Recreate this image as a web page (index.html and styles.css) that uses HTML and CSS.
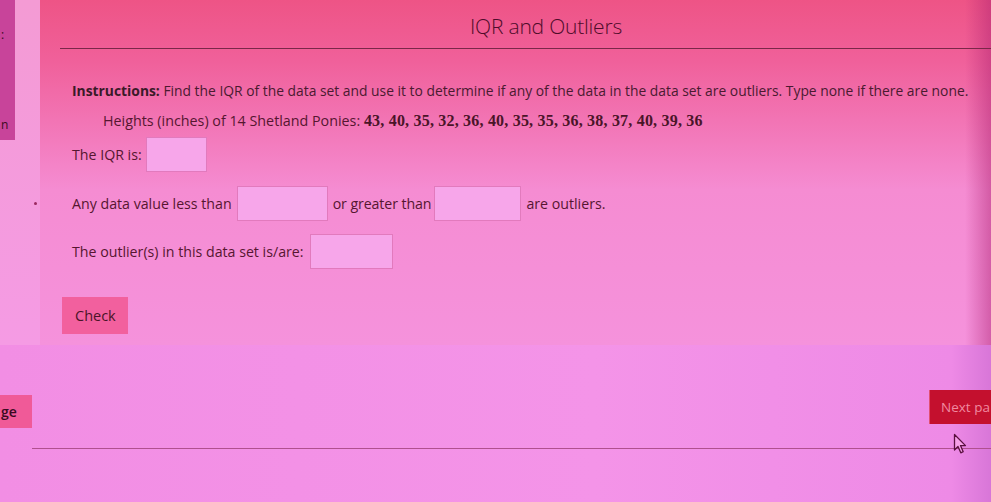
FILE: index.html
```html
<!DOCTYPE html>
<html>
<head>
<meta charset="utf-8">
<link rel="stylesheet" href="styles.css">
</head>
<body>
<div class="page">
  <div class="top">
    <aside class="side">
      <div class="side-panel"><span class="s1">:</span><span class="s2">n</span></div>
      <span class="dot"></span>
    </aside>
    <main class="card">
      <header class="head">
        <h1 class="title">IQR and Outliers</h1>
      </header>
      <p class="instr"><b>Instructions:</b> Find the IQR of the data set and use it to determine if any of the data in the data set are outliers. Type none if there are none.</p>
      <p class="heights">Heights (inches) of 14 Shetland Ponies: <span class="math">43, 40, 35, 32, 36, 40, 35, 35, 36, 38, 37, 40, 39, 36</span></p>
      <div class="row r1"><span>The IQR is:</span><span class="box w60"></span></div>
      <div class="row r2"><span>Any data value less than</span><span class="box w90"></span><span>or greater than</span><span class="box w86"></span><span>are outliers.</span></div>
      <div class="row r3"><span>The outlier(s) in this data set is/are:</span><span class="box w82"></span></div>
      <button class="check">Check</button>
    </main>
  </div>
  <footer class="foot">
    <div class="nav">
      <button class="prev">ge</button>
      <button class="next">Next pa</button>
    </div>
    <div class="rule"></div>
  </footer>
  <svg class="cursor" width="16" height="22" viewBox="0 0 16 22"><path d="M1.5 1.5 L1.5 17 L5 13.5 L7.8 19.8 L10.2 18.7 L7.5 12.6 L12.5 12.6 Z" fill="#f6a0e8" stroke="#5a1040" stroke-width="1.3" stroke-linejoin="round"/></svg>
</div>
</body>
</html>
```
FILE: styles.css
```css
html, body {
  margin: 0;
  padding: 0;
}
body {
  width: 991px;
  height: 502px;
  overflow: hidden;
  background: linear-gradient(to right, #f28ee4 0, #f494e8 60%, #ee8ae6 96%, #d876d8 100%);
  font-family: "Open Sans", "Noto Sans", sans-serif;
  color: #561630;
}
.page {
  position: relative;
  width: 991px;
  height: 502px;
}
.top {
  display: flex;
  height: 345px;
}
.side {
  width: 40px;
  flex: none;
  background: linear-gradient(to bottom, #f49bd4, #f59be4);
}
.side-panel {
  width: 15px;
  height: 140px;
  background: #c8449a;
  display: flex;
  flex-direction: column;
  font-size: 12px;
  color: #3a0a20;
  line-height: 14px;
  overflow: hidden;
}
.s1 { margin-top: 28px; padding-left: 1px; }
.s2 { margin-top: 76px; padding-left: 1px; }
.dot {
  display: block;
  width: 3px;
  height: 3px;
  border-radius: 50%;
  background: #9a2860;
  margin: 62px 0 0 34px;
}
.card {
  flex: 1;
  min-width: 0;
  padding: 0 0 0 32px;
  background:
    linear-gradient(to right, rgba(180,30,110,0) 0, rgba(180,30,110,0) 925px, rgba(170,30,110,0.45) 951px),
    linear-gradient(to bottom, #ee5486 0, #f0609a 60px, #f274b4 120px, #f58cd2 190px, #f592dc 345px);
  display: flex;
  flex-direction: column;
  align-items: flex-start;
}
.head {
  margin-left: -12px;
  width: 972px;
  flex: none;
  height: 48px;
  border-bottom: 1px solid #7a2848;
  display: flex;
  justify-content: center;
  align-items: flex-end;
}
.title {
  margin: 0 0 7px 0;
  font-size: 21px;
  font-weight: 300;
  line-height: 30px;
  color: #4e0c2a;
  letter-spacing: -0.2px;
}
.instr {
  margin: 32px 0 0 0;
  font-size: 13.85px;
  line-height: 20px;
  white-space: nowrap;
  color: #4a1a30;
}
.instr b {
  font-weight: 700;
  color: #3a1a28;
}
.heights {
  margin: 10px 0 0 31px;
  font-size: 14.3px;
  line-height: 20px;
  white-space: nowrap;
}
.math {
  font-family: "Liberation Serif", "DejaVu Serif", serif;
  font-weight: 700;
  font-size: 16px;
  letter-spacing: 0.2px;
  color: #4a1428;
}
.row {
  display: flex;
  align-items: center;
  font-size: 14.2px;
  white-space: nowrap;
}
.r1 { margin-top: 6px; gap: 4px; }
.r2 { margin-top: 14px; gap: 5px; }
.r2 > span:nth-child(3) { letter-spacing: -0.1px; margin-right: -2px; }
.r3 { margin-top: 13px; gap: 6px; }
.box {
  display: block;
  height: 33px;
  background: #f7a6ea;
  border: 1px solid #e27abd;
}
.w60 { width: 59px; }
.w90 { width: 89px; }
.w86 { width: 85px; }
.w82 { width: 81px; }
.check {
  margin: 28px 0 0 -10px;
  height: 37px;
  width: 66px;
  padding: 0 0 0 13px;
  text-align: left;
  border: none;
  background: #f2609e;
  font-family: inherit;
  font-size: 14.5px;
  color: #4a1428;
}
.foot {
  display: flex;
  flex-direction: column;
}
.nav {
  display: flex;
  justify-content: space-between;
  align-items: flex-start;
  margin-top: 45px;
}
.prev {
  margin-top: 5px;
  width: 32px;
  height: 33px;
  border: none;
  padding: 0 0 0 1px;
  text-align: left;
  background: #f05a98;
  font-family: inherit;
  font-size: 14px;
  font-weight: 600;
  color: #3a0a20;
}
.next {
  width: 62px;
  height: 34px;
  border: none;
  border-left: 1px solid #e05070;
  padding: 0 0 0 11px;
  text-align: left;
  background: #c4102e;
  font-family: inherit;
  font-size: 13.5px;
  color: #f08aa0;
  white-space: nowrap;
  overflow: hidden;
}
.rule {
  margin: 20px 0 0 32px;
  height: 1px;
  background: #b0508e;
}
.cursor {
  position: absolute;
  left: 953px;
  top: 433px;
}
```
